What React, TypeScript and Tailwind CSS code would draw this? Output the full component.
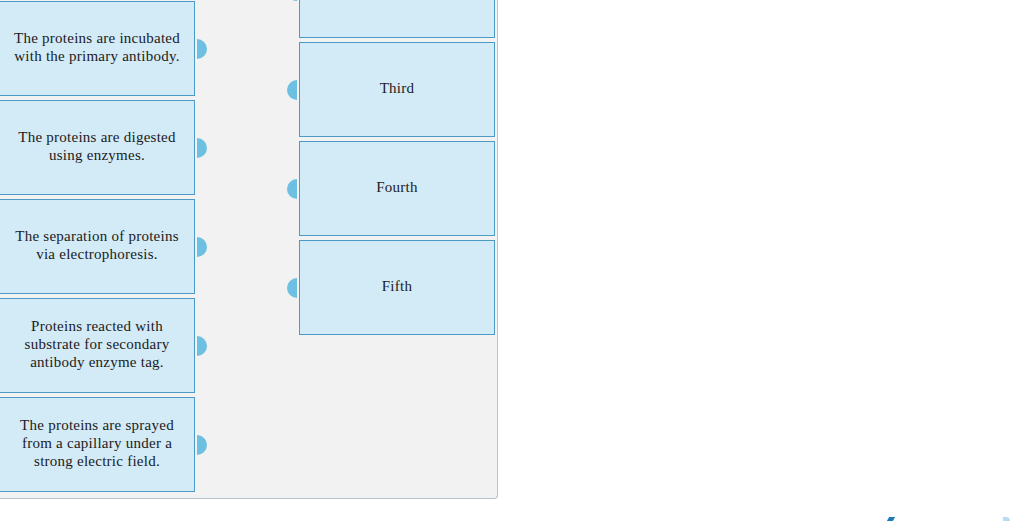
const leftItems = [
  ["The proteins are incubated", "with the primary antibody."],
  ["The proteins are digested", "using enzymes."],
  ["The separation of proteins", "via electrophoresis."],
  ["Proteins reacted with", "substrate for secondary", "antibody enzyme tag."],
  ["The proteins are sprayed", "from a capillary under a", "strong electric field."],
];

const rightItems = ["", "Third", "Fourth", "Fifth"];

const SourceCard = ({ lines }: { lines: string[] }) => (
  <div className="relative h-[95px] w-[196px] -ml-[1px] pb-[4px] flex items-center justify-center bg-[#d3eaf7] border border-[#4b9bc6] text-center">
    <p className="text-[15px] leading-[18px] tracking-[0.25px] text-[#1b1b1b]">
      {lines.map((l, i) => (
        <span key={i} className="block">{l}</span>
      ))}
    </p>
    <span className="absolute left-[calc(100%+3px)] top-1/2 -translate-y-1/2 w-[10px] h-[20px] rounded-r-full bg-[#6ec0e2]" />
  </div>
);

const TargetCard = ({ label }: { label: string }) => (
  <div className="relative h-[95px] w-[196px] pb-[4px] flex items-center justify-center bg-[#d3eaf7] border border-[#4b9bc6]">
    <span className="text-[15px] leading-[18px] tracking-[0.25px] text-[#1b1b1b]">{label}</span>
    <span className="absolute right-[calc(100%+3px)] top-1/2 -translate-y-1/2 w-[10px] h-[20px] rounded-l-full bg-[#6ec0e2]" />
  </div>
);

const App = () => {
  return (
    <div
      className="w-[1017px] h-[521px] overflow-hidden bg-white"
      style={{ fontFamily: '"Liberation Serif", "Times New Roman", serif' }}
    >
      <div className="flex h-[499px] w-[498px] bg-[#f2f2f2] border-r border-b border-[#b7c2cf] rounded-br-[4px] overflow-hidden">
        <div className="flex flex-col gap-[4px] pt-[1px]">
          {leftItems.map((lines, i) => (
            <SourceCard key={i} lines={lines} />
          ))}
        </div>
        <div className="flex flex-col gap-[4px] ml-[104px] -mt-[57px]">
          {rightItems.map((label, i) => (
            <TargetCard key={i} label={label} />
          ))}
        </div>
      </div>
      <div className="flex items-start mt-[18px]">
        <span className="ml-[888px] w-[6px] h-[4px] bg-[#1a7bb8] -skew-x-[30deg]" />
        <span className="ml-[109px] w-[7px] h-[4px] bg-[#b4def2] rounded-tr-sm" />
      </div>
    </div>
  );
};

export default App;
